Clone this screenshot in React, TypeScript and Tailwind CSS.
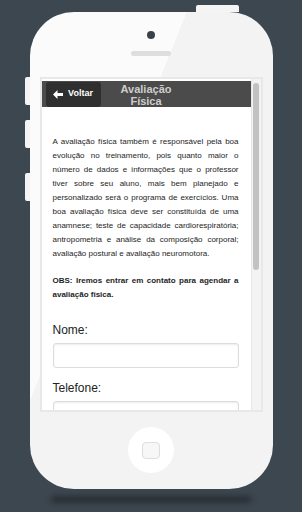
import React from 'react';

const SideButton = ({ top }: { top: string }) => (
  <div className={`absolute -left-[5px] ${top} w-[5px] h-[28px] rounded-l-[2px] bg-[#f4f4f4]`} />
);

const Field = ({ label }: { label: string }) => (
  <div className="flex flex-col">
    <label className="text-[12px] leading-[14px] text-[#222]">{label}</label>
    <div className="mt-[6px] h-[25px] rounded-[3px] border border-[#dcdcdc] bg-white shadow-[inset_0_1px_2px_rgba(0,0,0,0.08)]" />
  </div>
);

export default function App() {
  return (
    <div
      className="w-[302px] h-[512px] bg-[#3d4750] overflow-hidden flex flex-col items-center"
      style={{ fontFamily: '"Liberation Sans", Arial, sans-serif' }}
    >
      {/* Phone body */}
      <div className="relative mt-[12px] w-[243px] h-[477px] rounded-[44px] bg-[linear-gradient(112deg,#fbfbfb_0%,#fbfbfb_36%,#f3f3f3_36%,#f3f3f3_100%)] flex flex-col items-center">
        <div className="absolute -top-[7px] left-[166px] w-[43px] h-[7px] rounded-t-[2px] bg-[#f4f4f4]" />
        <SideButton top="top-[65px]" />
        <SideButton top="top-[108px]" />
        <SideButton top="top-[161px]" />

        {/* Camera + speaker */}
        <div className="mt-[19px] w-[8px] h-[8px] rounded-full bg-[#3b4148]" />
        <div className="mt-[12px] w-[40px] h-[5px] rounded-full bg-[#dedede]" />

        {/* Screen */}
        <div className="mt-[21px] w-[223px] h-[335px] border-2 border-[#e8e8e8] bg-white flex overflow-hidden">
          <div className="flex-1 flex flex-col pt-[2px] min-w-0">
            {/* Header */}
            <div className="h-[30px] bg-[#4b4b4b] grid grid-cols-[1fr_auto_1fr] items-center px-[4px]">
              <div className="justify-self-start w-[55px] h-[25px] rounded-[3px] bg-[#2f2f2f] flex items-center justify-center gap-[5px] shadow-[0_1px_0_rgba(255,255,255,0.08)]">
                <svg width="10" height="9" viewBox="0 0 10 9">
                  <path d="M0 4.5 L4.5 0 L4.5 3 L10 3 L10 6 L4.5 6 L4.5 9 Z" fill="#fff" />
                </svg>
                <span className="text-[9px] font-bold text-white">Voltar</span>
              </div>
              <div className="pt-[2px] text-center text-[11px] leading-[12px] font-bold text-[#cdcdcd]">
                Avaliação
                <br />
                Física
              </div>
              <div />
            </div>

            {/* Body */}
            <div className="flex-1 pl-[11px] pr-[12px] pt-[28px] text-[#1e1e1e]">
              <p className="text-[8px] leading-[14px] text-justify">
                A avaliação física também é responsável pela boa evolução no treinamento, pois quanto maior o
                número de dados e informações que o professor tiver sobre seu aluno, mais bem planejado e
                personalizado será o programa de exercícios. Uma boa avaliação física deve ser constituída de uma
                anamnese; teste de capacidade cardiorespiratória; antropometria e análise da composição corporal;
                avaliação postural e avaliação neuromotora.
              </p>
              <p className="mt-[13px] text-[8px] leading-[14px] font-bold text-justify">
                OBS: Iremos entrar em contato para agendar a avaliação física.
              </p>
              <div className="mt-[21px] flex flex-col gap-[13px]">
                <Field label="Nome:" />
                <Field label="Telefone:" />
              </div>
            </div>
          </div>

          {/* Scrollbar */}
          <div className="w-[10px] bg-[#f3f3f3] border-l border-[#e6e6e6] pt-[4px] flex justify-center">
            <div className="w-[6px] h-[187px] rounded-full bg-[#c2c2c2]" />
          </div>
        </div>

        {/* Home button */}
        <div className="mt-[15px] w-[46px] h-[46px] rounded-full bg-white flex items-center justify-center">
          <div className="w-[18px] h-[17px] rounded-[4px] border border-[#dedede] bg-[#f7f7f7]" />
        </div>
      </div>

      {/* Shadow under phone */}
      <div className="mt-[8px] w-[200px] h-[5px] rounded-full bg-black/50 blur-[3px]" />
    </div>
  );
}
